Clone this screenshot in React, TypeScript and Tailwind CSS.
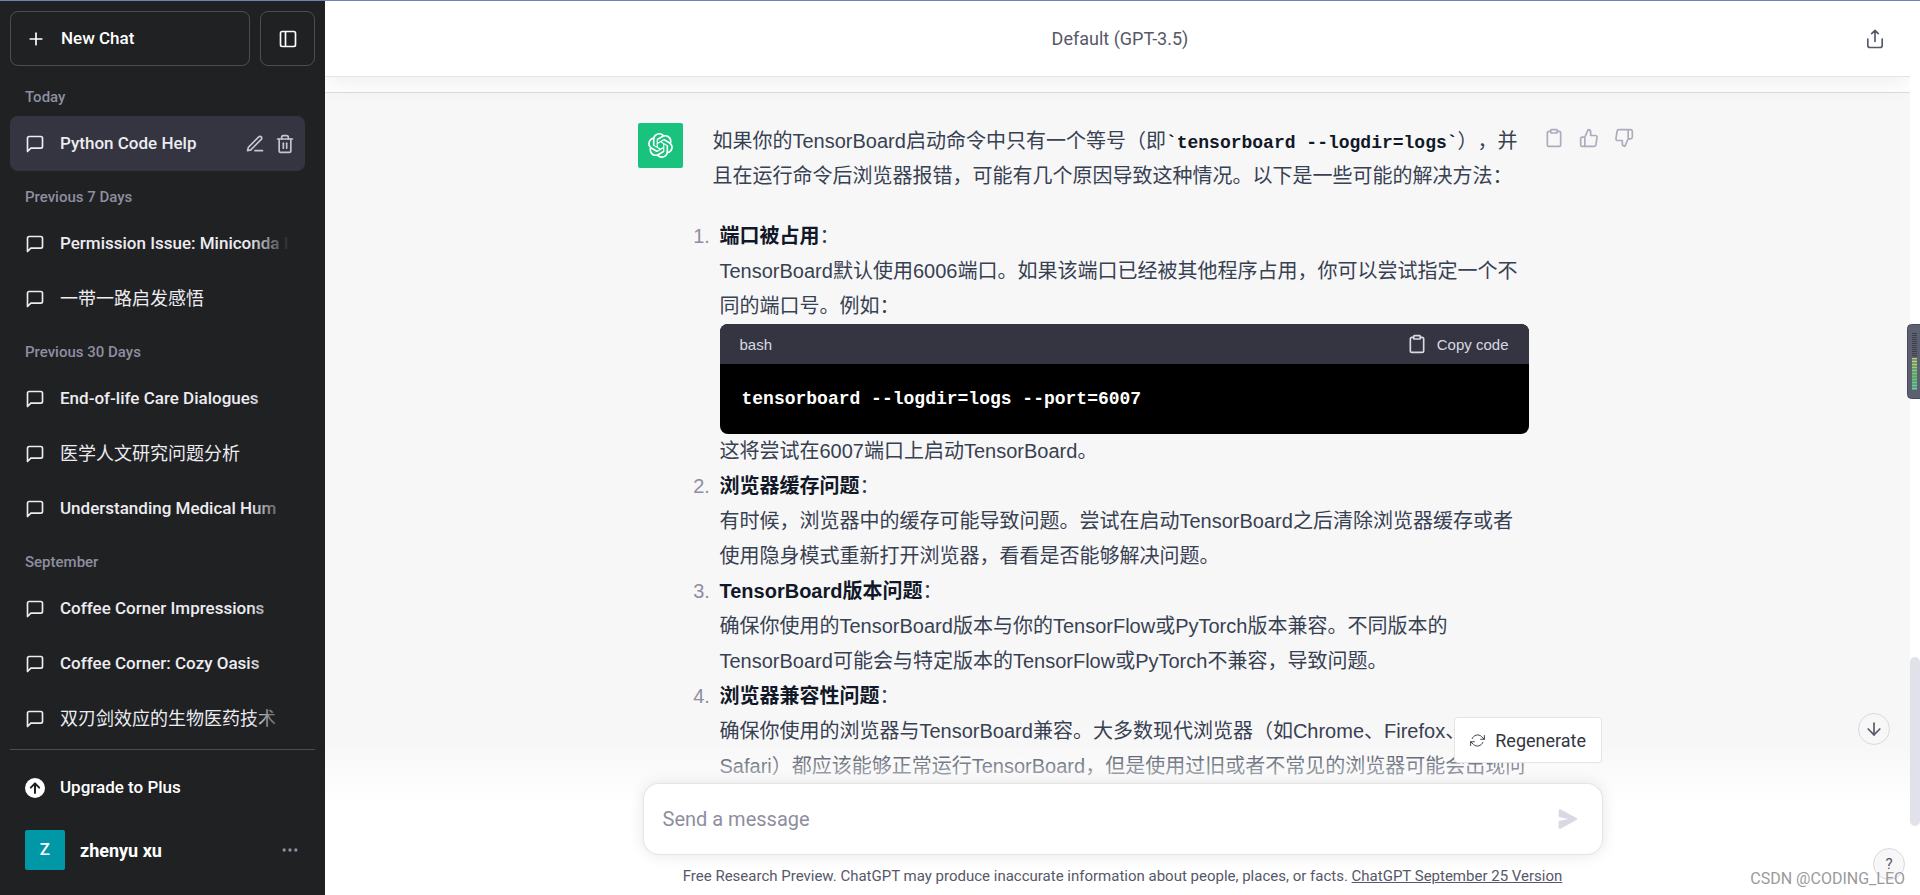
import type { ReactNode } from 'react'
import { FiArrowDown, FiClipboard, FiEdit3, FiMessageSquare, FiMoreHorizontal, FiPlus, FiRefreshCw, FiThumbsDown, FiThumbsUp, FiTrash2 } from 'react-icons/fi'
import { SiOpenai } from 'react-icons/si'

type Group = { label: string; chats: string[] }

const groups: Group[] = [
    { label: 'Today', chats: ['Python Code Help'] },
    { label: 'Previous 7 Days', chats: ['Permission Issue: Miniconda I', '一带一路启发感悟'] },
    { label: 'Previous 30 Days', chats: ['End-of-life Care Dialogues', '医学人文研究问题分析', 'Understanding Medical Hum'] },
    { label: 'September', chats: ['Coffee Corner Impressions', 'Coffee Corner: Cozy Oasis', '双刃剑效应的生物医药技术'] },
]

const activeChat = 'Python Code Help'

// Han glyphs look too heavy at medium weight
const isHan = (text: string) => /[\u4e00-\u9fff]/.test(text)

function ChatItem({ title }: { title: string }) {
    const active = title === activeChat
    return (
        <li className={active ? 'flex h-[55px] items-center rounded-lg bg-[#343541] px-[15px]' : 'flex h-[55px] items-center px-[15px]'}>
            <a href="#" className="relative flex min-w-0 flex-1 items-center gap-[15px]">
                <FiMessageSquare className="shrink-0" size={20} />
                <span className={isHan(title) ? 'text-[18px] font-normal whitespace-nowrap' : 'whitespace-nowrap'}>{title}</span>
                {!active && <span className="absolute inset-y-0 right-0 w-10 bg-linear-to-l from-[#202123] to-transparent" />}
            </a>
            {active && (
                <div className="-mr-[5px] flex gap-[10px] text-[#c5c5d2]">
                    <button aria-label="Rename chat"><FiEdit3 size={20} /></button>
                    <button aria-label="Delete chat"><FiTrash2 size={20} /></button>
                </div>
            )}
        </li>
    )
}

function Sidebar() {
    return (
        <aside className="flex w-[325px] shrink-0 flex-col bg-[#202123] p-[10px] font-['Roboto','Noto_Sans_CJK_SC',sans-serif] text-[17px] font-medium text-[#ececf1]">
            <div className="flex gap-[10px]">
                <button className="flex h-[55px] flex-1 items-center gap-[15px] rounded-lg border border-white/20 px-[15px] text-white">
                    <FiPlus size={20} /> New Chat
                </button>
                <button aria-label="Hide sidebar" className="flex h-[55px] w-[55px] items-center justify-center rounded-lg border border-white/20 text-white">
                    <svg width="20" height="20" viewBox="0 0 24 24" fill="none" stroke="currentColor" strokeWidth="2">
                        <rect x="3" y="3" width="18" height="18" rx="2" />
                        <path d="M9 3v18" />
                    </svg>
                </button>
            </div>
            <nav className="mt-[5px] min-h-0 flex-1 overflow-hidden pr-[10px]">
                {groups.map((group) => (
                    <section key={group.label}>
                        <h3 className="px-[15px] pt-4 pb-[9px] text-[15px] leading-5 text-[#8e8ea0]">{group.label}</h3>
                        <ul>
                            {group.chats.map((title) => <ChatItem key={title} title={title} />)}
                        </ul>
                    </section>
                ))}
            </nav>
            <div className="border-t border-white/20 pt-[10px] text-white">
                <a href="#" className="flex h-[55px] items-center gap-[15px] px-[15px]">
                    <svg width="20" height="20" viewBox="0 0 20 20">
                        <circle cx="10" cy="10" r="10" fill="white" />
                        <path d="M10 15V5.500M5.800 9.600L10 5.400l4.200 4.200" fill="none" stroke="#202123" strokeWidth="2" strokeLinecap="round" strokeLinejoin="round" />
                    </svg>
                    Upgrade to Plus
                </a>
                <button className="flex h-[70px] w-full items-center gap-[15px] px-[15px] text-[18px] font-bold">
                    <span className="flex size-10 items-center justify-center rounded-xs bg-[#0097a7] text-[17px] font-medium">Z</span>
                    zhenyu xu
                    <FiMoreHorizontal className="ml-auto text-[#8e8ea0]" size={20} />
                </button>
            </div>
        </aside>
    )
}

function CodeBlock({ lang, code }: { lang: string; code: string }) {
    return (
        <div className="overflow-hidden rounded-lg bg-black">
            <div className="flex h-10 items-center justify-between bg-[#343541] px-5 text-[15px] text-[#d9d9e3]">
                <span>{lang}</span>
                <button className="flex items-center gap-[10px]"><FiClipboard size={20} />Copy code</button>
            </div>
            <pre className="px-[22px] font-['Liberation_Mono',monospace] text-[18px] leading-[70px] font-bold text-white">{code}</pre>
        </div>
    )
}

function Cause({ title, children }: { title: string; children: ReactNode }) {
    return (
        <li className="pl-1">
            <p><strong className="text-[#111827]">{title}</strong>：</p>
            {children}
        </li>
    )
}

function Message() {
    return (
        <article className="flex-1 border-t border-black/10 bg-[#f7f7f8] pt-[30px]">
            <div className="mx-auto flex max-w-[960px] text-[20px] leading-[35px] text-[#374151] [text-spacing-trim:space-all]">
                <div className="mr-[30px] flex size-[45px] shrink-0 items-center justify-center rounded-xs bg-[#19c37d] text-white">
                    <SiOpenai size={25} />
                </div>
                <div className="min-w-0 flex-1 pt-px">
                    <p>
                        如果你的TensorBoard启动命令中只有一个等号（即<code className="font-['Liberation_Mono',monospace] text-[18px] leading-none font-bold text-[#111827]">`tensorboard --logdir=logs`</code>），并<br />
                        且在运行命令后浏览器报错，可能有几个原因导致这种情况。以下是一些可能的解决方法：
                    </p>
                    <ol className="mt-[25px] list-decimal pl-[3px] whitespace-nowrap marker:text-[#8e8ea0]">
                        <Cause title="端口被占用">
                            <p>TensorBoard默认使用6006端口。如果该端口已经被其他程序占用，你可以尝试指定一个不<br />同的端口号。例如：</p>
                            <CodeBlock lang="bash" code="tensorboard --logdir=logs --port=6007" />
                            <p>这将尝试在6007端口上启动TensorBoard。</p>
                        </Cause>
                        <Cause title="浏览器缓存问题">
                            <p>有时候，浏览器中的缓存可能导致问题。尝试在启动TensorBoard之后清除浏览器缓存或者<br />使用隐身模式重新打开浏览器，看看是否能够解决问题。</p>
                        </Cause>
                        <Cause title="TensorBoard版本问题">
                            <p>确保你使用的TensorBoard版本与你的TensorFlow或PyTorch版本兼容。不同版本的<br />TensorBoard可能会与特定版本的TensorFlow或PyTorch不兼容，导致问题。</p>
                        </Cause>
                        <Cause title="浏览器兼容性问题">
                            <p>确保你使用的浏览器与TensorBoard兼容。大多数现代浏览器（如Chrome、Firefox、<br />Safari）都应该能够正常运行TensorBoard，但是使用过旧或者不常见的浏览器可能会出现问</p>
                        </Cause>
                    </ol>
                </div>
                <div className="-mr-[36px] ml-[15px] flex h-[30px] shrink-0 items-center gap-[15px] text-[#acacbe]">
                    <button aria-label="Copy"><FiClipboard size={20} /></button>
                    <button aria-label="Good response"><FiThumbsUp size={20} /></button>
                    <button aria-label="Bad response"><FiThumbsDown size={20} /></button>
                </div>
            </div>
        </article>
    )
}

function Composer() {
    return (
        <div className="absolute inset-x-0 bottom-0 bg-linear-to-b from-transparent to-white to-40% pt-[40px] font-['Roboto','Noto_Sans_CJK_SC',sans-serif]">
            <div className="mx-auto max-w-[960px]">
                <form className="flex h-[72px] items-center rounded-2xl border border-black/10 bg-white px-[19px] shadow-[0_0_15px_rgba(0,0,0,0.1)]">
                    <input aria-label="Message" placeholder="Send a message" className="min-w-0 flex-1 text-[20px] outline-none placeholder:text-[#8e8ea0]" />
                    <button aria-label="Send message" className="mr-[5px] text-[#d9d9e3]">
                        <svg width="20" height="20" viewBox="0 0 16 16" fill="currentColor">
                            <path d="M.5 1.163A1 1 0 0 1 1.970.280l12.868 6.837a1 1 0 0 1 0 1.766L1.969 15.720A1 1 0 0 1 .5 14.836V10.330a1 1 0 0 1 .816-.983L8.500 8 1.316 6.653A1 1 0 0 1 .5 5.670V1.163Z" />
                        </svg>
                    </button>
                </form>
                <p className="pt-[11px] pb-[9px] text-center text-[15px] leading-5 text-[#565869]">
                    Free Research Preview. ChatGPT may produce inaccurate information about people, places, or facts.{' '}
                    <a href="#" className="underline">ChatGPT September 25 Version</a>
                </p>
            </div>
            <button className="absolute right-[318px] bottom-[132px] flex h-[46px] items-center gap-[10px] rounded border border-black/10 bg-white px-[15px] text-[18px] text-[#343541]">
                <FiRefreshCw size={15} strokeWidth={1.500} /> Regenerate
            </button>
            <button aria-label="Scroll to bottom" className="absolute right-[30px] bottom-[150px] flex size-8 items-center justify-center rounded-full border border-[#d9d9e3] bg-[#f7f7f8] text-[#565869]">
                <FiArrowDown size={20} />
            </button>
            <button aria-label="Help" className="absolute right-[15px] bottom-[15px] size-8 rounded-full border border-[#d9d9e3] bg-[#f7f7f8] text-[15px] text-[#565869]">?</button>
            <p className="absolute right-[15px] bottom-[6px] text-[16px] leading-5 text-[#9a9a9a]">CSDN @CODING_LEO</p>
        </div>
    )
}

// small level meter docked at the right edge of the window
function LevelMeter() {
    return (
        <svg className="absolute top-[323px] right-0" width="13" height="75" viewBox="0 0 13 75">
            <rect x="0.500" y="0.500" width="18" height="74" rx="4" fill="#5c6070" stroke="#474a56" />
            <rect x="5" y="34" width="5" height="32" fill="#6f9a80" />
            {Array.from({ length: 12 }, (_, i) => (
                <rect key={i} x="5" y={9 + i * 2} width="5" height="1" fill="#3c3f4b" />
            ))}
            {Array.from({ length: 11 }, (_, i) => (
                <rect key={i} x="5" y={34 + i * 3} width="5" height="1" fill={`hsl(${54 + i * 11} 65% 58%)`} />
            ))}
        </svg>
    )
}

export default function App() {
    return (
        <div className="relative flex h-screen overflow-hidden border-t border-[#6b85b5] bg-white font-['Liberation_Sans','Noto_Sans_CJK_SC',sans-serif]">
            <Sidebar />
            <main className="relative flex min-w-0 flex-1 flex-col">
                <div className="mr-[10px] flex min-h-0 flex-1 flex-col overflow-hidden">
                    <header className="z-10 mb-[15px] flex h-[76px] shrink-0 items-center border-b border-black/10 bg-white px-[25px] font-['Roboto',sans-serif] text-[18px] text-[#565869] shadow-[0_0_30px_rgba(0,0,0,0.1)]">
                        <h1 className="flex-1 pl-[25px] text-center">Default (GPT-3.5)</h1>
                        <button aria-label="Share chat">
                            <svg width="20" height="20" viewBox="0 0 20 20" fill="none" stroke="currentColor" strokeWidth="1.670" strokeLinecap="round" strokeLinejoin="round">
                                <path d="M2.800 10v6.500a2 2 0 0 0 2 2h10.400a2 2 0 0 0 2-2V10M10 12.500V1.700M6.700 4.700L10 1.400l3.300 3.300" />
                            </svg>
                        </button>
                    </header>
                    <Message />
                </div>
                <Composer />
                <div className="absolute top-[656px] right-0 h-[169px] w-[10px] rounded-full bg-[#d9d9e3]/80" />
            </main>
            <LevelMeter />
        </div>
    )
}
